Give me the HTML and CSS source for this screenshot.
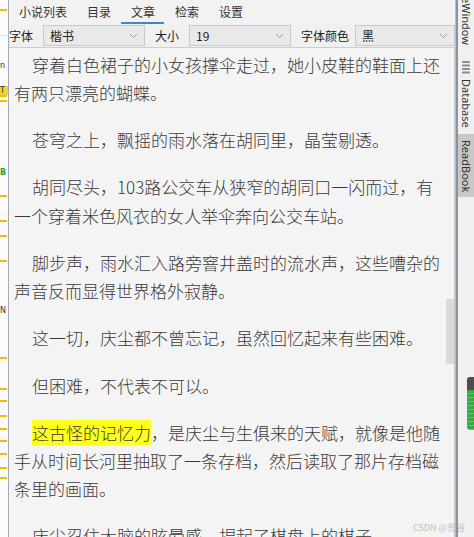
FILE: index.html
```html
<!DOCTYPE html>
<html lang="zh-CN">
<head>
<meta charset="utf-8">
<title>ReadBook</title>
<link rel="stylesheet" href="styles.css">
</head>
<body>
<div class="app">
  <div class="gutter">
    <i class="mk" style="top:9px"></i>
    <i class="mk faint" style="top:35px"></i>
    <span class="gch" style="top:61px">n</span>
    <span class="gch hlc" style="top:86px">T</span>
    <i class="mk" style="top:95px"></i>
    <i class="mk" style="top:100px"></i>
    <span class="gch green" style="top:168px">B</span>
    <i class="mk" style="top:195px"></i>
    <i class="mk" style="top:220px"></i>
    <i class="mk" style="top:235px"></i>
    <i class="mk" style="top:260px"></i>
    <span class="gch" style="top:306px">N</span>
    <i class="mk" style="top:357px"></i>
    <i class="mk" style="top:388px"></i>
    <i class="mk" style="top:400px"></i>
    <i class="mk" style="top:415px"></i>
    <i class="mk" style="top:428px"></i>
    <i class="mk" style="top:440px"></i>
    <i class="mk" style="top:453px"></i>
    <i class="mk" style="top:467px"></i>
    <i class="mk" style="top:477px"></i>
  </div>

  <div class="main">
    <nav class="tabs">
      <span class="tab">小说列表</span>
      <span class="tab">目录</span>
      <span class="tab active">文章</span>
      <span class="tab">检索</span>
      <span class="tab">设置</span>
    </nav>

    <div class="toolbar">
      <span class="lbl">字体</span>
      <div class="combo c1"><span>楷书</span><svg class="chev" width="9" height="6" viewBox="0 0 9 6"><polyline points="1,1 4.5,4.5 8,1" fill="none" stroke="#9a9a9a" stroke-width="1"/></svg></div>
      <span class="lbl">大小</span>
      <div class="combo c2"><span>19</span><svg class="chev" width="9" height="6" viewBox="0 0 9 6"><polyline points="1,1 4.5,4.5 8,1" fill="none" stroke="#9a9a9a" stroke-width="1"/></svg></div>
      <span class="lbl wide">字体颜色</span>
      <div class="combo c3"><span>黑</span><svg class="chev" width="9" height="6" viewBox="0 0 9 6"><polyline points="1,1 4.5,4.5 8,1" fill="none" stroke="#9a9a9a" stroke-width="1"/></svg></div>
    </div>

    <div class="reader">
      <div class="content">
        <p>穿着白色裙子的小女孩撑伞走过，她小皮鞋的鞋面上还有两只漂亮的蝴蝶。</p>
        <p>苍穹之上，飘摇的雨水落在胡同里，晶莹剔透。</p>
        <p>胡同尽头，103路公交车从狭窄的胡同口一闪而过，有一个穿着米色风衣的女人举伞奔向公交车站。</p>
        <p>脚步声，雨水汇入路旁窨井盖时的流水声，这些嘈杂的声音反而显得世界格外寂静。</p>
        <p>这一切，庆尘都不曾忘记，虽然回忆起来有些困难。</p>
        <p>但困难，不代表不可以。</p>
        <p><mark class="hl">这古怪的记忆力</mark>，是庆尘与生俱来的天赋，就像是他随手从时间长河里抽取了一条存档，然后读取了那片存档磁条里的画面。</p>
        <p>庆尘忍住大脑的眩晕感，捏起了棋盘上的棋子。</p>
      </div>
      <div class="vscroll"><div class="thumb"></div></div>
    </div>
  </div>

  <div class="splitter"></div>

  <aside class="side">
    <span class="vt remote">RemoteWindow</span>
    <svg class="dbicon" width="10" height="14" viewBox="0 0 10 14">
      <rect x="1" y="1" width="8" height="2" rx="1" fill="#8a8a8a"/>
      <rect x="1" y="4.5" width="8" height="2" rx="1" fill="#8a8a8a"/>
      <rect x="1" y="8" width="8" height="2" rx="1" fill="#8a8a8a"/>
      <rect x="1" y="11.5" width="8" height="2" rx="1" fill="#8a8a8a"/>
    </svg>
    <span class="vt db">Database</span>
    <span class="vt vtab active">ReadBook</span>
    <div class="meter"><div class="meter-top"></div><div class="meter-bar"></div></div>
  </aside>

  <div class="watermark">CSDN @荒谷</div>
</div>
</body>
</html>
```

FILE: styles.css
```css
* { box-sizing: border-box; }

html, body {
  margin: 0;
  padding: 0;
}

body {
  width: 474px;
  height: 537px;
  overflow: hidden;
  background: #f0f0f0;
  font-family: "Noto Sans CJK SC", "Noto Sans", sans-serif;
  color: #333;
}

.app {
  position: relative;
  display: flex;
  width: 474px;
  height: 537px;
  overflow: hidden;
}

/* left gutter of a neighbouring window */
.gutter {
  position: relative;
  flex: 0 0 9px;
  background: #fbfbfb;
  border-right: 1px solid #a3abb9;
}

.mk {
  position: absolute;
  left: 0;
  width: 7px;
  height: 2px;
  background: #e8c200;
}

.mk.faint { background: #efe3a8; height: 1px; }

.gch {
  position: absolute;
  left: 0;
  width: 8px;
  font-family: "DejaVu Sans", sans-serif;
  font-size: 8px;
  line-height: 9px;
  color: #333;
}

.gch.hlc { background: #f2d23a; }
.gch.green { color: #2f9a2f; font-weight: bold; }

/* main panel */
.main {
  flex: 0 0 446px;
  display: flex;
  flex-direction: column;
  background: #f0f0f0;
}

.tabs {
  display: flex;
  height: 26px;
  background: #f2f2f2;
}

.tab {
  position: relative;
  padding: 0 10px;
  font-size: 12px;
  line-height: 24px;
  color: #333;
}

.tab.active::after {
  content: "";
  position: absolute;
  left: 0;
  right: 1px;
  bottom: 0;
  height: 2px;
  background: #3f84c8;
}

.toolbar {
  display: flex;
  align-items: center;
  height: 24px;
  gap: 10px;
  font-size: 12px;
}

.lbl {
  flex: 0 0 auto;
  color: #222;
  line-height: 20px;
}

.combo {
  display: flex;
  align-items: center;
  justify-content: space-between;
  height: 21px;
  padding: 0 6px 0 6px;
  background: #e9e9e9;
  border: 1px solid #c9c9c9;
  color: #222;
}

.combo span { line-height: 18px; }

.c1, .c2 { flex: 0 0 102px; }
.c3 { flex: 1 1 auto; margin-left: -4px; }

.chev { flex: 0 0 auto; }

/* reader */
.reader {
  flex: 1 1 auto;
  display: flex;
  min-height: 0;
  background: #f4f4f4;
  border-top: 1px solid #cdcdcd;
  border-right: 1px solid #c9c9c9;
}

.content {
  flex: 1 1 auto;
  padding: 3px 4px 0 5px;
  font-size: 17px;
  font-weight: 300;
  line-height: 28.2px;
  color: #3a3a3a;
}

.content p {
  margin: 0 0 19px 0;
  text-indent: 18px;
}

.hl {
  background: #ffff1e;
  color: inherit;
}

.vscroll {
  flex: 0 0 8px;
}

.thumb {
  margin-top: 251px;
  height: 65px;
  background: #dadada;
}

.splitter {
  flex: 0 0 3px;
  background: linear-gradient(to right, #b9bfc9 0 1px, #8a93a3 1px 3px);
}

/* right tool window strip */
.side {
  position: relative;
  flex: 0 0 16px;
  display: flex;
  flex-direction: column;
  align-items: center;
  background: #f0f0f0;
  font-family: "Noto Sans", "DejaVu Sans", sans-serif;
  font-size: 11px;
  color: #333;
}

.vt {
  writing-mode: vertical-rl;
  line-height: 16px;
  white-space: nowrap;
}

.remote { margin-top: -37px; }

.dbicon { margin-top: 15px; flex: 0 0 auto; }

.db { margin-top: 5px; }

.vtab {
  margin-top: 6px;
  width: 16px;
  padding: 6px 0 5px;
  text-align: center;
}

.vtab.active { background: #c8c8c8; }

.meter {
  position: absolute;
  top: 377px;
  left: 9px;
  width: 10px;
  height: 53px;
  border-radius: 3px 0 0 3px;
  overflow: hidden;
  display: flex;
  flex-direction: column;
}

.meter-top {
  flex: 0 0 13px;
  background: #4e4e4e;
}

.meter-bar {
  flex: 1 1 auto;
  background: repeating-linear-gradient(to bottom, #37a844 0 3px, #62c36c 3px 4px);
}

.watermark {
  position: absolute;
  left: 413px;
  top: 522px;
  font-size: 9px;
  line-height: 12px;
  color: rgba(140, 140, 140, 0.55);
  font-family: "Noto Sans CJK SC", "Noto Sans", sans-serif;
}
```
